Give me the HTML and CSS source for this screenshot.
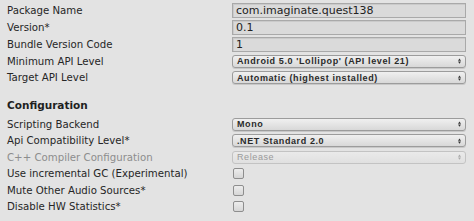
FILE: index.html
```html
<!DOCTYPE html>
<html lang="en">
<head>
    <meta charset="UTF-8">
    <title>Player Settings - Other Settings</title>
    <link rel="stylesheet" href="styles.css">
</head>
<body>
    <div class="panel">
        <!-- Identificação -->
        <div class="row row-text">
            <span class="label">Package Name</span>
            <div class="field">com.imaginate.quest138</div>
        </div>
        <div class="row row-text">
            <span class="label">Version*</span>
            <div class="field">0.1</div>
        </div>
        <div class="row row-text">
            <span class="label">Bundle Version Code</span>
            <div class="field">1</div>
        </div>
        <div class="row">
            <span class="label">Minimum API Level</span>
            <div class="popup"><span>Android 5.0 'Lollipop' (API level 21)</span><svg class="arrows" viewBox="0 0 4 7"><path d="M2 0L4 3H0Z M0 4H4L2 7Z"/></svg></div>
        </div>
        <div class="row">
            <span class="label">Target API Level</span>
            <div class="popup"><span>Automatic (highest installed)</span><svg class="arrows" viewBox="0 0 4 7"><path d="M2 0L4 3H0Z M0 4H4L2 7Z"/></svg></div>
        </div>

        <!-- Configuração -->
        <h3 class="section">Configuration</h3>
        <div class="row">
            <span class="label">Scripting Backend</span>
            <div class="popup"><span>Mono</span><svg class="arrows" viewBox="0 0 4 7"><path d="M2 0L4 3H0Z M0 4H4L2 7Z"/></svg></div>
        </div>
        <div class="row">
            <span class="label">Api Compatibility Level*</span>
            <div class="popup"><span>.NET Standard 2.0</span><svg class="arrows" viewBox="0 0 4 7"><path d="M2 0L4 3H0Z M0 4H4L2 7Z"/></svg></div>
        </div>
        <div class="row disabled">
            <span class="label">C++ Compiler Configuration</span>
            <div class="popup"><span>Release</span><svg class="arrows" viewBox="0 0 4 7"><path d="M2 0L4 3H0Z M0 4H4L2 7Z"/></svg></div>
        </div>
        <div class="row">
            <span class="label">Use incremental GC (Experimental)</span>
            <div><span class="check"></span></div>
        </div>
        <div class="row">
            <span class="label">Mute Other Audio Sources*</span>
            <div><span class="check"></span></div>
        </div>
        <div class="row">
            <span class="label">Disable HW Statistics*</span>
            <div><span class="check"></span></div>
        </div>
    </div>
</body>
</html>
```

FILE: styles.css
```css
body {
    margin: 0;
    background-color: #e3e3e3;
    font-family: "DejaVu Sans", sans-serif;
    color: #262626;
}

.panel {
    display: flex;
    flex-direction: column;
    padding: 2px 8px 0 7px;
}

.row {
    display: grid;
    grid-template-columns: 225px 234px;
    align-items: center;
    height: 16.5px;
}

.row-text {
    height: 17px;
}

.label {
    font-size: 10.2px;
    white-space: nowrap;
}

.field {
    height: 13px;
    line-height: 13px;
    padding: 0 3px;
    border: 1px solid #a9a9a9;
    background-color: #dadada;
    box-shadow: inset 1px 1px 0 #cacaca;
    font-size: 11px;
    color: #222;
}

.popup {
    display: flex;
    align-items: center;
    justify-content: space-between;
    height: 11px;
    padding: 0 4px 0 4px;
    border: 1px solid #9c9c9c;
    border-radius: 3px;
    background: linear-gradient(#f0f0f0, #d8d8d8);
    box-shadow: 0 1px 0 #c8c8c8;
    font-family: "Liberation Sans", Arial, sans-serif;
    font-weight: bold;
    font-size: 9px;
    color: #2a2a2a;
    letter-spacing: 0.6px;
}

.arrows {
    width: 3px;
    height: 6px;
    fill: #333;
}

.section {
    margin: 11px 0 3px 0;
    font-size: 10.5px;
    font-weight: bold;
    color: #1f1f1f;
    height: 16px;
    line-height: 16px;
}

.disabled .label {
    color: #8d8d8d;
}

.disabled .popup {
    border-color: #c3c3c3;
    background: linear-gradient(#eaeaea, #e0e0e0);
    box-shadow: none;
    color: #9a9a9a;
    font-weight: normal;
}

.disabled .arrows {
    fill: #a8a8a8;
}

.check {
    display: block;
    width: 9px;
    height: 9px;
    margin-left: 1px;
    border: 1px solid #8e8e8e;
    border-radius: 2px;
    background: linear-gradient(#ededed, #d6d6d6);
}
```
